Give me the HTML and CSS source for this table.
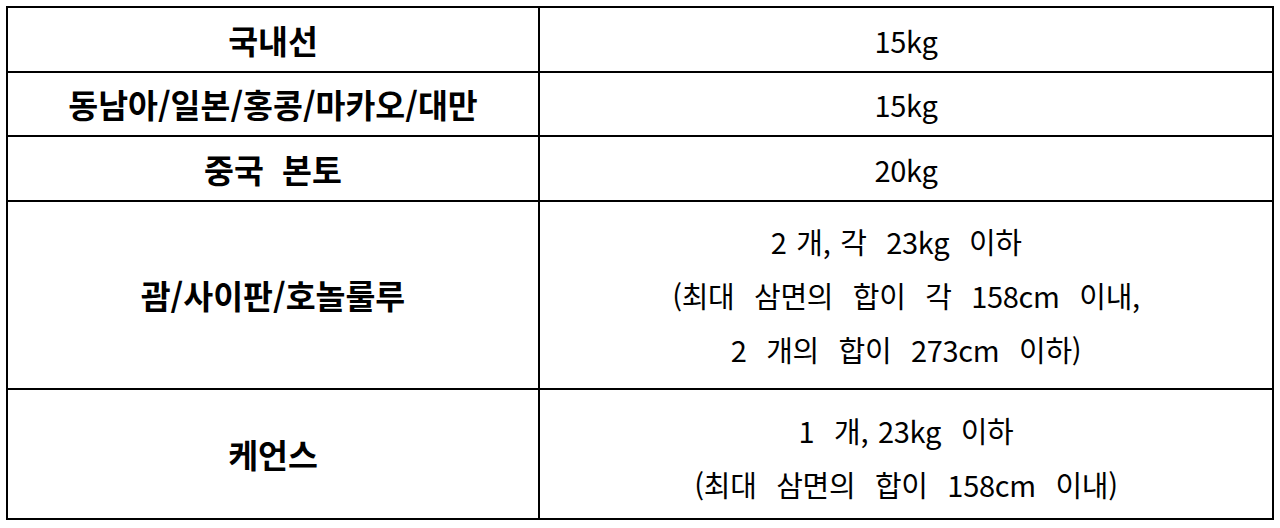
FILE: index.html
```html
<!DOCTYPE html>
<html lang="ko">
<head>
<meta charset="utf-8">
<link rel="stylesheet" href="styles.css">
</head>
<body>
<table class="bag">
  <colgroup><col class="c1"><col class="c2"></colgroup>
  <tr class="r1"><th>국내선</th><td>15kg</td></tr>
  <tr class="r2"><th>동남아/일본/홍콩/마카오/대만</th><td>15kg</td></tr>
  <tr class="r3"><th>중국&nbsp; 본토</th><td>20kg</td></tr>
  <tr class="r4"><th>괌/사이판/호놀룰루</th><td>2 개, 각&nbsp; 23kg&nbsp; 이하&nbsp;&nbsp;<br>(최대&nbsp; 삼면의&nbsp; 합이&nbsp; 각&nbsp; 158cm&nbsp; 이내,<br>2&nbsp; 개의&nbsp; 합이&nbsp; 273cm&nbsp; 이하)</td></tr>
  <tr class="r5"><th>케언스</th><td>1&nbsp; 개, 23kg&nbsp; 이하<br>(최대&nbsp; 삼면의&nbsp; 합이&nbsp; 158cm&nbsp; 이내)</td></tr>
</table>
</body>
</html>
```
FILE: styles.css
```css
html, body {
  margin: 0;
  padding: 0;
  background: #fff;
}
body {
  padding: 6px;
  font-family: "Noto Sans CJK KR", "Noto Sans", sans-serif;
  color: #000;
}
.bag {
  border-collapse: collapse;
  width: 1266px;
  table-layout: fixed;
  border: 2px solid #000;
}
.c1 { width: 532px; }
.c2 { width: 734px; }
.bag th, .bag td {
  border: 2px solid #000;
  padding: 0;
  text-align: center;
  vertical-align: middle;
  line-height: 54px;
}
.bag th {
  font-weight: 700;
  font-size: 32.5px;
  letter-spacing: 0;
}
.bag td {
  font-weight: 400;
  font-size: 29px;
  letter-spacing: -0.3px;
  word-spacing: 2px;
}
.r1 { height: 65px; }
.r2 { height: 64px; }
.r3 { height: 65px; }
.r4 { height: 188px; }
.r5 { height: 130px; }
.r5 td { padding-top: 5px; }
```
